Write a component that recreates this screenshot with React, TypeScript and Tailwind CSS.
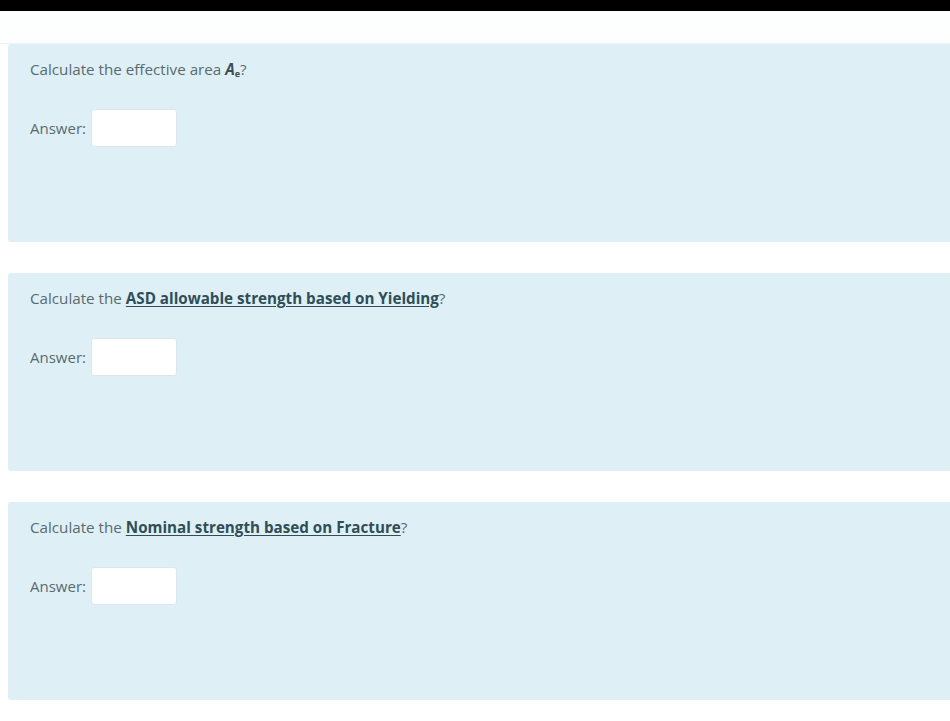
import type { ReactNode } from "react";

type Question = {
  id: number;
  prompt: ReactNode;
};

const questions: Question[] = [
  {
    id: 1,
    prompt: (
      <>
        Calculate the effective area{" "}
        <b className="italic font-bold text-[#3f4c52]">
          A<sub className="text-[9px] not-italic">e</sub>
        </b>
        ?
      </>
    ),
  },
  {
    id: 2,
    prompt: (
      <>
        Calculate the{" "}
        <a href="#" className="font-bold text-[#2f4e58] underline underline-offset-2">
          ASD allowable strength based on Yielding
        </a>
        ?
      </>
    ),
  },
  {
    id: 3,
    prompt: (
      <>
        Calculate the{" "}
        <a href="#" className="font-bold text-[#2f4e58] underline underline-offset-2">
          Nominal strength based on Fracture
        </a>
        ?
      </>
    ),
  },
];

function QuestionBox({ q }: { q: Question }) {
  return (
    <div className="h-[198px] ml-2 bg-[#def0f5] rounded-l-[3px] pl-[22px] pt-[14px]">
      <p className="text-[15.2px] leading-[22px] text-[#5a6a70]">{q.prompt}</p>
      <div className="flex items-center gap-[5px] mt-[29px]">
        <span className="text-[15px] text-[#5a6a70]">Answer:</span>
        <input
          type="text"
          className="w-[86px] h-[38px] bg-white border border-[#dbe7ea] rounded-[3px] outline-none"
        />
      </div>
    </div>
  );
}

export default function App() {
  return (
    <div
      className="w-[950px] h-[721px] bg-white overflow-hidden"
      style={{ fontFamily: '"Open Sans", "Liberation Sans", sans-serif' }}
    >
      <div className="h-[11px] bg-black" />
      <div className="h-[33px] bg-[#fdfefe] border-b border-[#eef5f6]" />
      <div className="flex flex-col gap-[31px]">
        {questions.map((q) => (
          <QuestionBox key={q.id} q={q} />
        ))}
      </div>
    </div>
  );
}
